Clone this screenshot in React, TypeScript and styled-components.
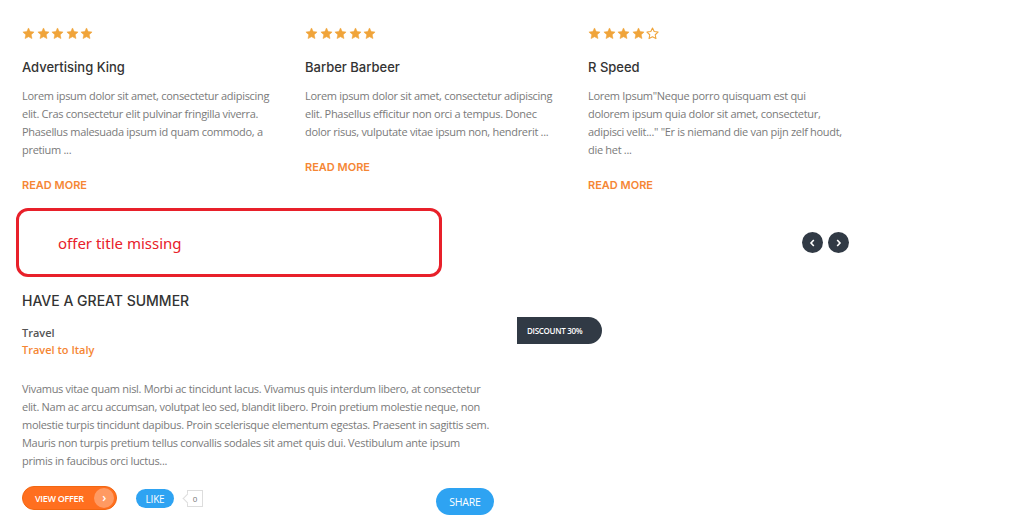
import { FC } from 'react';
import styled, { createGlobalStyle } from 'styled-components';

const orange = '#f58634';
const dark = '#313a45';
const blue = '#2ea3f2';

const GlobalStyle = createGlobalStyle`
  body {
    margin: 0;
    background: #fff;
    font-family: 'Open Sans', 'Liberation Sans', sans-serif;
  }
`;

type Review = { rating: number; title: string; text: string };

const reviews: Review[] = [
  {
    rating: 5,
    title: 'Advertising King',
    text: 'Lorem ipsum dolor sit amet, consectetur adipiscing elit. Cras consectetur elit pulvinar fringilla viverra. Phasellus malesuada ipsum id quam commodo, a pretium ...',
  },
  {
    rating: 5,
    title: 'Barber Barbeer',
    text: 'Lorem ipsum dolor sit amet, consectetur adipiscing elit. Phasellus efficitur non orci a tempus. Donec dolor risus, vulputate vitae ipsum non, hendrerit ...',
  },
  {
    rating: 4,
    title: 'R Speed',
    text: 'Lorem Ipsum"Neque porro quisquam est qui dolorem ipsum quia dolor sit amet, consectetur, adipisci velit..." "Er is niemand die van pijn zelf houdt, die het ...',
  },
];

const Star: FC<{ filled: boolean }> = ({ filled }) => (
  <svg width="13" height="13" viewBox="0 0 24 24">
    <path
      d="M12 1.8l3.1 6.6 7.2.9-5.3 5 1.4 7.1L12 17.9l-6.4 3.5 1.4-7.1-5.3-5 7.2-.9z"
      fill={filled ? '#f0a43a' : 'none'}
      stroke="#f0a43a"
      strokeWidth={filled ? 1 : 2}
      strokeLinejoin="round"
    />
  </svg>
);

const Chevron: FC<{ dir: 'left' | 'right' }> = ({ dir }) => (
  <svg width="7" height="8" viewBox="0 0 7 8">
    <polyline
      points={dir === 'left' ? '4.8,1 2,4 4.8,7' : '2.2,1 5,4 2.2,7'}
      fill="none"
      stroke="#fff"
      strokeWidth="1.6"
    />
  </svg>
);

export default function App() {
  return (
    <>
      <GlobalStyle />
      <Page>
        <ReviewGrid>
          {reviews.map((r) => (
            <ReviewCard key={r.title}>
              <Stars>
                {[0, 1, 2, 3, 4].map((i) => (
                  <Star key={i} filled={i < r.rating} />
                ))}
              </Stars>
              <CardTitle>{r.title}</CardTitle>
              <BodyText>{r.text}</BodyText>
              <ReadMore href="#">Read more</ReadMore>
            </ReviewCard>
          ))}
        </ReviewGrid>

        <HeaderRow>
          <MissingBox>offer title missing</MissingBox>
          <NavGroup>
            <NavButton aria-label="previous">
              <Chevron dir="left" />
            </NavButton>
            <NavButton aria-label="next">
              <Chevron dir="right" />
            </NavButton>
          </NavGroup>
        </HeaderRow>

        <OfferRow>
          <OfferMain>
            <OfferTitle>Have a great summer</OfferTitle>
            <Category>Travel</Category>
            <SubLink href="#">Travel to Italy</SubLink>
            <OfferText>
              Vivamus vitae quam nisl. Morbi ac tincidunt lacus. Vivamus quis interdum libero, at consectetur
              elit. Nam ac arcu accumsan, volutpat leo sed, blandit libero. Proin pretium molestie neque, non
              molestie turpis tincidunt dapibus. Proin scelerisque elementum egestas. Praesent in sagittis sem.
              Mauris non turpis pretium tellus convallis sodales sit amet quis dui. Vestibulum ante ipsum
              primis in faucibus orci luctus...
            </OfferText>
            <ActionRow>
              <ViewOffer>
                View offer
                <ViewCircle>›</ViewCircle>
              </ViewOffer>
              <PillButton $size="small">Like</PillButton>
              <Counter>0</Counter>
              <PillButton $size="large">Share</PillButton>
            </ActionRow>
          </OfferMain>
          <Discount>Discount 30%</Discount>
        </OfferRow>
      </Page>
    </>
  );
}

const Page = styled.div`
  width: 828px;
  padding: 27px 0 0 22px;
`;

const ReviewGrid = styled.div`
  display: grid;
  grid-template-columns: repeat(3, 258px);
  column-gap: 25px;
`;

const ReviewCard = styled.div`
  display: flex;
  flex-direction: column;
  align-items: flex-start;
`;

const Stars = styled.div`
  display: flex;
  gap: 1.5px;
  height: 13px;
`;

const CardTitle = styled.h3`
  margin: 19px 0 0;
  font-family: Inter, 'Open Sans', sans-serif;
  font-size: 13px;
  font-weight: 500;
  line-height: 16px;
  color: #333;
`;

const BodyText = styled.p`
  margin: 12px 0 0;
  font-size: 11px;
  letter-spacing: -0.3px;
  line-height: 18px;
  color: #7a7a7a;
`;

const ReadMore = styled.a`
  margin-top: 19px;
  font-family: Inter, 'Open Sans', sans-serif;
  font-size: 11px;
  font-weight: 600;
  line-height: 14px;
  color: ${orange};
  text-transform: uppercase;
  text-decoration: none;
`;

const HeaderRow = styled.div`
  display: flex;
  align-items: center;
  justify-content: space-between;
  margin: 16px 0 0 -6px;
  width: 833px;
`;

const MissingBox = styled.div`
  box-sizing: border-box;
  width: 426px;
  height: 69px;
  border: 3px solid #e8202a;
  border-radius: 12px;
  padding-left: 39px;
  display: flex;
  align-items: center;
  font-family: 'Noto Sans', 'Liberation Sans', sans-serif;
  font-size: 15px;
  color: #e8202a;
`;

const NavGroup = styled.div`
  display: flex;
  gap: 5px;
`;

const NavButton = styled.button`
  width: 21px;
  height: 21px;
  padding: 0;
  border: none;
  border-radius: 50%;
  background: ${dark};
  display: flex;
  align-items: center;
  justify-content: center;
`;

const OfferRow = styled.div`
  display: flex;
  align-items: flex-start;
  gap: 23px;
  margin-top: 15px;
`;

const OfferMain = styled.div`
  width: 472px;
  display: flex;
  flex-direction: column;
  align-items: flex-start;
`;

const OfferTitle = styled.h2`
  margin: 0;
  font-family: Inter, 'Open Sans', sans-serif;
  font-size: 14px;
  font-weight: 500;
  line-height: 18px;
  color: #333;
  text-transform: uppercase;
`;

const Category = styled.div`
  margin-top: 14px;
  font-size: 11px;
  font-weight: 600;
  line-height: 18px;
  color: #555;
`;

const SubLink = styled.a`
  font-size: 11px;
  font-weight: 600;
  line-height: 16px;
  color: ${orange};
  text-decoration: none;
`;

const OfferText = styled(BodyText)`
  margin-top: 22px;
  max-width: 470px;
`;

const ActionRow = styled.div`
  align-self: stretch;
  display: flex;
  align-items: flex-start;
  margin-top: 16px;
`;

const ViewOffer = styled.button`
  box-sizing: border-box;
  width: 95px;
  height: 24px;
  padding: 0 2px 0 12px;
  border: 1px solid #f26712;
  border-radius: 12px;
  background: #ff6f1f;
  display: flex;
  align-items: center;
  justify-content: space-between;
  font-family: 'Open Sans', sans-serif;
  font-size: 9px;
  font-weight: 600;
  letter-spacing: -0.3px;
  color: #fff;
  text-transform: uppercase;
`;

const ViewCircle = styled.span`
  width: 20px;
  height: 20px;
  border-radius: 50%;
  background: rgba(255, 255, 255, 0.3);
  display: flex;
  align-items: center;
  justify-content: center;
  font-size: 12px;
  line-height: 1;
`;

const PillButton = styled.button<{ $size: 'small' | 'large' }>`
  box-sizing: border-box;
  height: ${(p) => (p.$size === 'small' ? '19px' : '27px')};
  width: ${(p) => (p.$size === 'small' ? '38px' : '58px')};
  margin: ${(p) => (p.$size === 'small' ? '3px 0 0 19px' : '2px 0 0 auto')};
  padding: 0;
  border: none;
  border-radius: 14px;
  background: ${blue};
  font-family: 'Open Sans', sans-serif;
  font-size: ${(p) => (p.$size === 'small' ? '10px' : '10.5px')};
  font-weight: 500;
  letter-spacing: -0.2px;
  color: #fff;
  text-transform: uppercase;
`;

const Counter = styled.span`
  position: relative;
  box-sizing: border-box;
  width: 16px;
  height: 17px;
  margin: 4px 0 0 13px;
  border: 1px solid #ddd;
  display: flex;
  align-items: center;
  justify-content: center;
  font-size: 8px;
  color: #777;

  &::before {
    content: '';
    position: absolute;
    left: -4px;
    top: 4px;
    width: 6px;
    height: 6px;
    background: #fff;
    border-left: 1px solid #ddd;
    border-bottom: 1px solid #ddd;
    transform: rotate(45deg);
  }
`;

const Discount = styled.div`
  margin-top: 25px;
  width: 85px;
  height: 27px;
  box-sizing: border-box;
  padding-left: 10px;
  border-radius: 0 14px 14px 0;
  background: ${dark};
  display: flex;
  align-items: center;
  font-family: 'Open Sans', sans-serif;
  font-size: 8px;
  font-weight: 600;
  letter-spacing: -0.3px;
  color: #fff;
  text-transform: uppercase;
`;
